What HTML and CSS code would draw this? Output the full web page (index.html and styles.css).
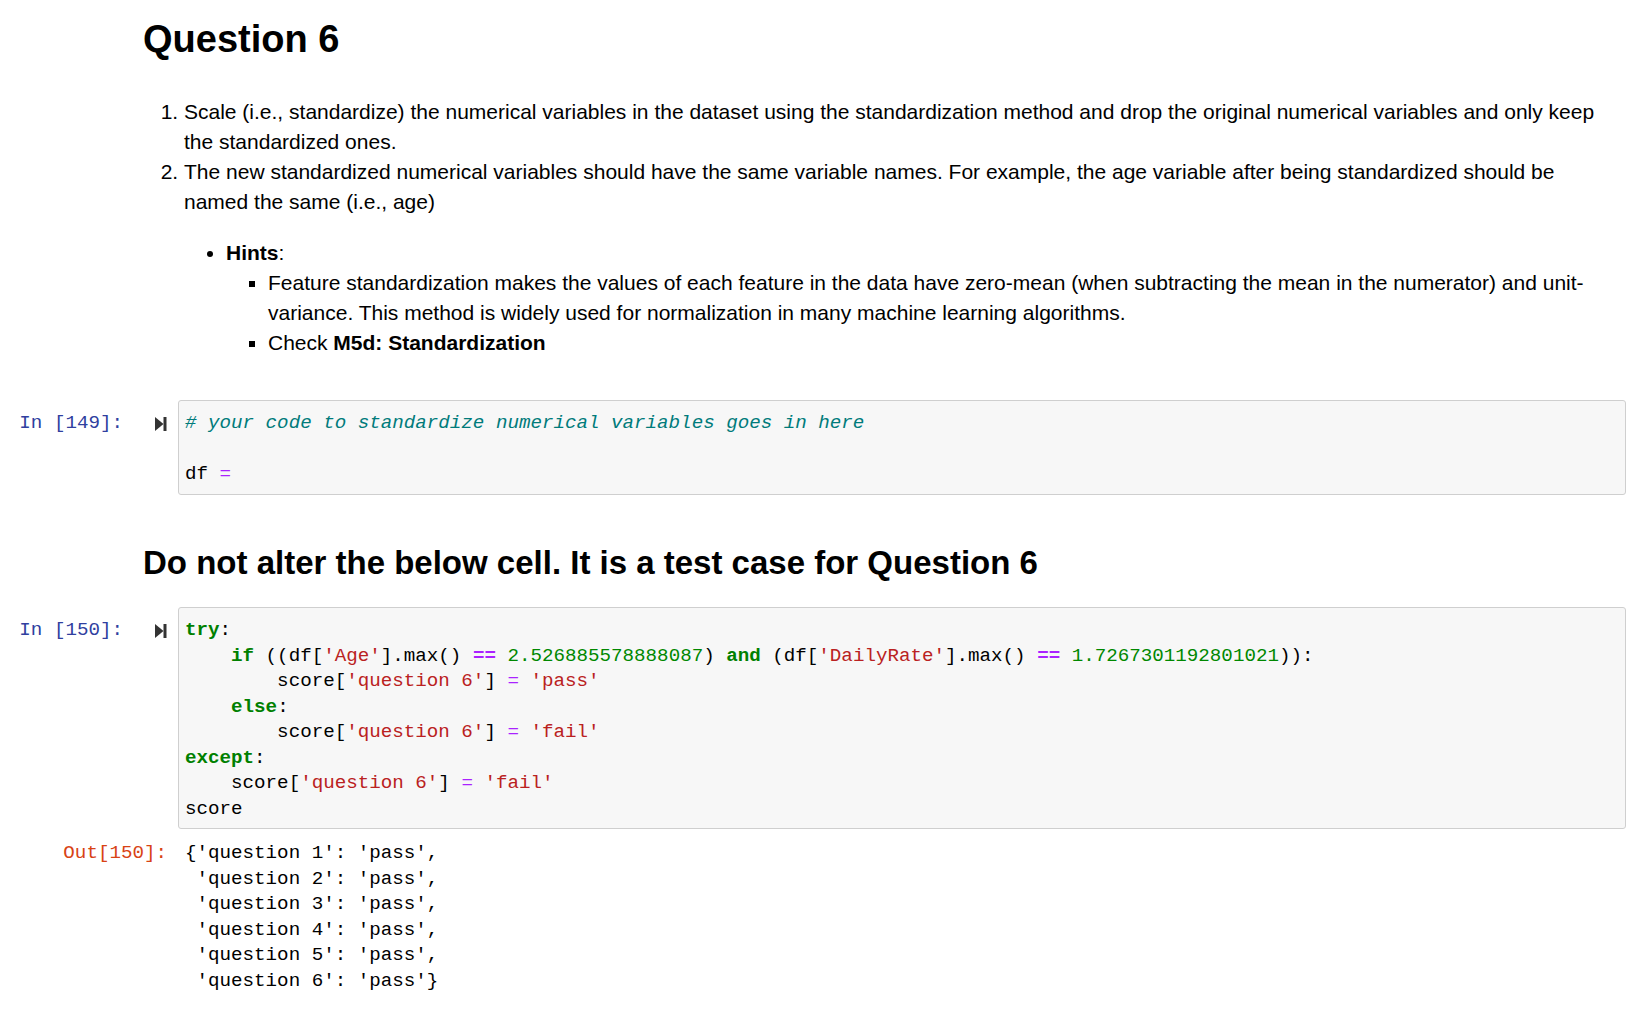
FILE: index.html
```html
<!DOCTYPE html>
<html lang="en">
<head>
<meta charset="utf-8">
<title>Question 6</title>
<link rel="stylesheet" href="styles.css">
</head>
<body>
<div class="notebook">
  <div class="md">
    <h1 class="h1">Question 6</h1>
    <ol class="steps">
      <li>Scale (i.e., standardize) the numerical variables in the dataset using the standardization method and drop the original numerical variables and only keep the standardized ones.</li>
      <li>The new standardized numerical variables should have the same variable names. For example, the age variable after being standardized should be named the same (i.e., age)</li>
    </ol>
    <ul class="hints">
      <li><strong>Hints</strong>:
        <ul class="sub">
          <li>Feature standardization makes the values of each feature in the data have zero-mean (when subtracting the mean in the numerator) and unit-variance. This method is widely used for normalization in many machine learning algorithms.</li>
          <li>Check <strong>M5d: Standardization</strong></li>
        </ul>
      </li>
    </ul>
  </div>

  <div class="cell cell-first">
    <div class="prompt prompt-in">
      <span class="prompt-text">In&nbsp;[149]:</span>
      <svg class="run" width="12" height="14" viewBox="0 0 12 14"><polygon points="0,0 8.5,7 0,14" fill="#333"/><rect x="8.5" y="0" width="3" height="14" fill="#333"/></svg>
    </div>
    <div class="input"><pre class="code"><span class="c"># your code to standardize numerical variables goes in here</span>

df <span class="o">=</span></pre></div>
  </div>

  <div class="md">
    <h2 class="h2">Do not alter the below cell. It is a test case for Question 6</h2>
  </div>

  <div class="cell cell-second">
    <div class="prompt prompt-in">
      <span class="prompt-text">In&nbsp;[150]:</span>
      <svg class="run" width="12" height="14" viewBox="0 0 12 14"><polygon points="0,0 8.5,7 0,14" fill="#333"/><rect x="8.5" y="0" width="3" height="14" fill="#333"/></svg>
    </div>
    <div class="input"><pre class="code"><span class="k">try</span>:
    <span class="k">if</span> ((df[<span class="s">'Age'</span>].max() <span class="ob">==</span> <span class="n">2.526885578888087</span>) <span class="k">and</span> (df[<span class="s">'DailyRate'</span>].max() <span class="ob">==</span> <span class="n">1.7267301192801021</span>)):
        score[<span class="s">'question 6'</span>] <span class="o">=</span> <span class="s">'pass'</span>
    <span class="k">else</span>:
        score[<span class="s">'question 6'</span>] <span class="o">=</span> <span class="s">'fail'</span>
<span class="k">except</span>:
    score[<span class="s">'question 6'</span>] <span class="o">=</span> <span class="s">'fail'</span>
score</pre></div>
  </div>

  <div class="cell cell-out">
    <div class="prompt prompt-out">
      <span class="prompt-text">Out[150]:</span>
    </div>
    <div class="output"><pre class="code">{'question 1': 'pass',
 'question 2': 'pass',
 'question 3': 'pass',
 'question 4': 'pass',
 'question 5': 'pass',
 'question 6': 'pass'}</pre></div>
  </div>
</div>
</body>
</html>
```

FILE: styles.css
```css
html, body {
  margin: 0;
  padding: 0;
  background: #ffffff;
}

body {
  font-family: "Liberation Sans", Arial, sans-serif;
  color: #000;
  font-size: 21px;
  line-height: 30px;
}

.notebook {
  width: 1639px;
  padding-bottom: 20px;
}

.md {
  display: flow-root;
  margin-left: 143px;
  margin-right: 29px;
}

.h1 {
  font-size: 38px;
  line-height: 46px;
  font-weight: bold;
  margin: 16px 0 0 0;
}

.steps {
  margin: 35px 0 0 0;
  padding-left: 41px;
}

.hints {
  margin: 21px 0 0 0;
  padding-left: 83px;
  list-style: disc;
}

.sub {
  margin: 0;
  padding-left: 42px;
  list-style: square;
}

.h2 {
  font-size: 33px;
  line-height: 40px;
  font-weight: bold;
  margin: 48px 0 0 0;
}

.cell {
  display: flex;
  align-items: flex-start;
  margin-right: 13px;
}

.cell-first {
  margin-top: 42px;
}

.cell-second {
  margin-top: 24.5px;
}

.cell-out {
  margin-top: 12px;
}

.prompt {
  width: 178px;
  flex: 0 0 178px;
  box-sizing: border-box;
  padding-right: 11px;
  display: flex;
  justify-content: flex-end;
  align-items: center;
  height: 25.5px;
  font-family: "Liberation Mono", "DejaVu Sans Mono", monospace;
  font-size: 19.2px;
  line-height: 25.5px;
}

.prompt-in {
  margin-top: 11px;
  color: #303F9F;
}

.prompt-out {
  color: #D84315;
}

.run {
  margin-left: 32px;
  display: block;
}

.input {
  flex: 1;
  min-width: 0;
  background: #f7f7f7;
  border: 1px solid #cfcfcf;
  border-radius: 3px;
  padding: 10px 6px 6px 6px;
}

.output {
  flex: 1;
  min-width: 0;
  padding-left: 7px;
}

.code {
  margin: 0;
  font-family: "Liberation Mono", "DejaVu Sans Mono", monospace;
  font-size: 19.2px;
  line-height: 25.5px;
  white-space: pre;
  color: #000;
}

.c { color: #007b7b; font-style: italic; }
.k { color: #008000; font-weight: bold; }
.s { color: #BA2121; }
.n { color: #008800; }
.o { color: #AA22FF; }
.ob { color: #AA22FF; font-weight: bold; }
```
